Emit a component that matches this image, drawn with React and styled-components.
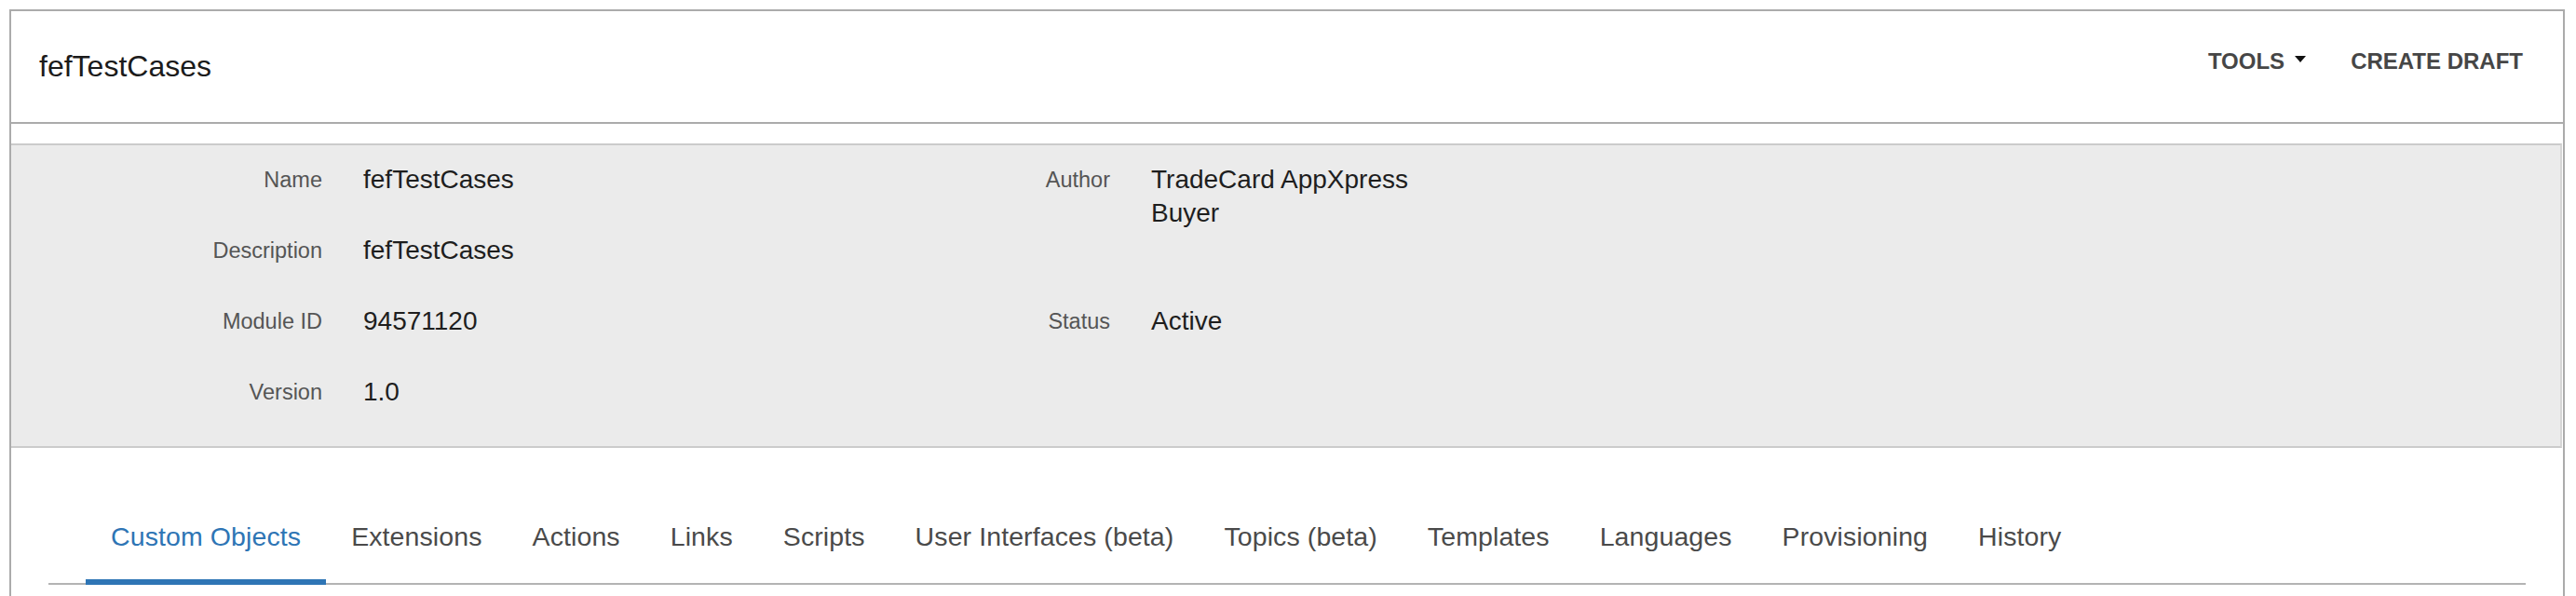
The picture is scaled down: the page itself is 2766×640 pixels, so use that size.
import React from "react";
import styled, { createGlobalStyle } from "styled-components";

const GlobalStyle = createGlobalStyle`
  html, body {
    margin: 0;
    padding: 0;
    background: #ffffff;
  }
  body {
    font-family: "Liberation Sans", Arial, Helvetica, sans-serif;
    color: #222;
  }
`;

const Frame = styled.div`
  margin: 10px 12px 0 10px;
  border: 2px solid #ababab;
  border-bottom: none;
  background: #fff;
  padding-bottom: 80px;
`;

const Header = styled.header`
  display: flex;
  justify-content: space-between;
  align-items: center;
  height: 119px;
  border-bottom: 2px solid #ababab;
  padding: 0 43px 0 30px;
`;

const Title = styled.h1`
  margin: 0;
  font-size: 32px;
  font-weight: 400;
  line-height: 1.15;
  color: #1b1b1b;
`;

const Actions = styled.div`
  align-self: flex-start;
  display: flex;
  align-items: center;
  gap: 48px;
  padding-top: 40px;
`;

const ActionButton = styled.button`
  display: inline-flex;
  align-items: center;
  background: none;
  border: none;
  padding: 0;
  margin: 0;
  font-family: inherit;
  font-size: 24px;
  font-weight: 700;
  line-height: 1.15;
  color: #464646;
  cursor: pointer;
`;

const Caret = styled.span`
  display: inline-block;
  width: 0;
  height: 0;
  margin-left: 11px;
  margin-bottom: 4px;
  border-left: 6px solid transparent;
  border-right: 6px solid transparent;
  border-top: 7px solid #111;
`;

const InfoPanel = styled.section`
  margin: 21px 1px 0 0;
  background: #ebebeb;
  border-top: 2px solid #cbcbcb;
  border-bottom: 2px solid #cbcbcb;
  border-right: 2px solid #d6d6d6;
  padding: 19px 0 40px 0;
`;

const FieldGrid = styled.dl`
  margin: 0;
  display: grid;
  grid-template-columns: 334px 424px 334px 320px;
  grid-template-rows: repeat(4, 36px);
  column-gap: 44px;
  row-gap: 40px;
  align-items: baseline;
`;

const Label = styled.dt`
  grid-column: ${(p) => p.$col};
  grid-row: ${(p) => p.$row};
  text-align: right;
  font-size: 23.5px;
  line-height: 36px;
  color: #555;
  margin: 0;
`;

const Value = styled.dd`
  grid-column: ${(p) => p.$col};
  grid-row: ${(p) => p.$row};
  margin: 0;
  font-size: 28px;
  line-height: 36px;
  color: #1e1e1e;
  align-self: start;
`;

const TabList = styled.nav`
  display: flex;
  margin: 49px 40px 0 40px;
  padding-left: 40px;
  border-bottom: 2px solid #b3b3b3;
`;

const Tab = styled.a`
  display: block;
  padding: 29px 27px 29px 27px;
  margin-bottom: -2px;
  border-bottom: 6px solid ${(p) => (p.$active ? "#2e75b5" : "transparent")};
  font-size: 28.5px;
  line-height: 34px;
  letter-spacing: 0.1px;
  color: ${(p) => (p.$active ? "#2e75b5" : "#4a4a4a")};
  text-decoration: none;
  white-space: nowrap;
  cursor: pointer;
`;

const leftFields = [
  ["Name", "fefTestCases"],
  ["Description", "fefTestCases"],
  ["Module ID", "94571120"],
  ["Version", "1.0"],
];

const rightFields = [
  ["Author", "TradeCard AppXpress Buyer", 1],
  ["Status", "Active", 3],
];

const tabs = [
  "Custom Objects",
  "Extensions",
  "Actions",
  "Links",
  "Scripts",
  "User Interfaces (beta)",
  "Topics (beta)",
  "Templates",
  "Languages",
  "Provisioning",
  "History",
];

export default function App() {
  return (
    <>
      <GlobalStyle />
      <Frame>
        <Header>
          <Title>fefTestCases</Title>
          <Actions>
            <ActionButton>
              TOOLS
              <Caret />
            </ActionButton>
            <ActionButton>CREATE DRAFT</ActionButton>
          </Actions>
        </Header>
        <InfoPanel>
          <FieldGrid>
            {leftFields.map(([label, value], i) => (
              <React.Fragment key={label}>
                <Label $col={1} $row={i + 1}>
                  {label}
                </Label>
                <Value $col={2} $row={i + 1}>
                  {value}
                </Value>
              </React.Fragment>
            ))}
            {rightFields.map(([label, value, row]) => (
              <React.Fragment key={label}>
                <Label $col={3} $row={row}>
                  {label}
                </Label>
                <Value $col={4} $row={row}>
                  {value}
                </Value>
              </React.Fragment>
            ))}
          </FieldGrid>
        </InfoPanel>
        <TabList>
          {tabs.map((t, i) => (
            <Tab key={t} $active={i === 0}>
              {t}
            </Tab>
          ))}
        </TabList>
      </Frame>
    </>
  );
}
